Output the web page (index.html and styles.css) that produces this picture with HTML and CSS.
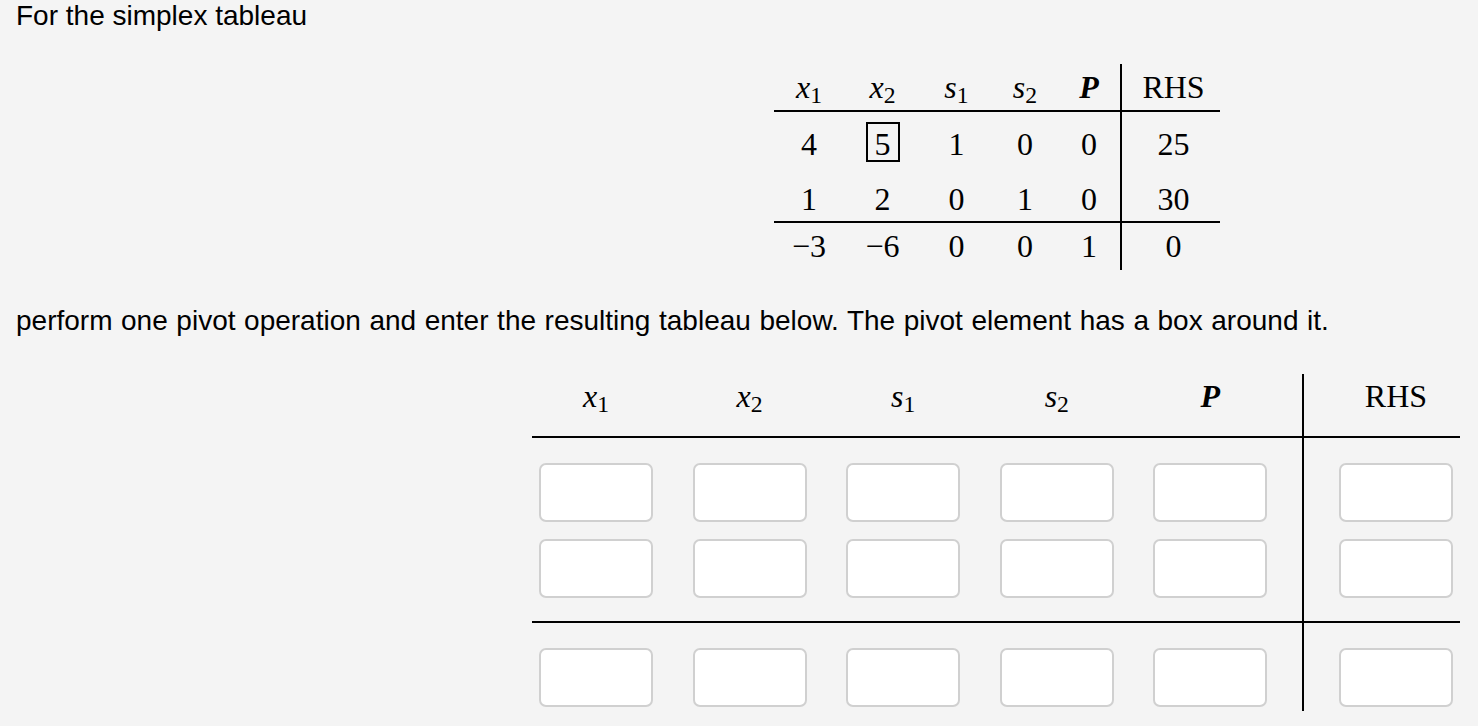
FILE: index.html
```html
<!DOCTYPE html>
<html lang="en">
<head>
<meta charset="utf-8">
<title>Simplex tableau pivot</title>
<link rel="stylesheet" href="styles.css">
</head>
<body>
<p class="prompt">For the simplex tableau</p>

<div class="given">
  <div class="gc gh"><i>x</i><span class="sb">1</span></div>
  <div class="gc gh"><i>x</i><span class="sb">2</span></div>
  <div class="gc gh"><i>s</i><span class="sb">1</span></div>
  <div class="gc gh"><i>s</i><span class="sb">2</span></div>
  <div class="gc gh"><b><i>P</i></b></div>
  <div class="gc gh rhs">RHS</div>

  <div class="gc g1">4</div>
  <div class="gc g1"><span class="pivot">5</span></div>
  <div class="gc g1">1</div>
  <div class="gc g1">0</div>
  <div class="gc g1">0</div>
  <div class="gc g1 rhs">25</div>

  <div class="gc g2">1</div>
  <div class="gc g2">2</div>
  <div class="gc g2">0</div>
  <div class="gc g2">1</div>
  <div class="gc g2">0</div>
  <div class="gc g2 rhs">30</div>

  <div class="gc g3">&minus;3</div>
  <div class="gc g3">&minus;6</div>
  <div class="gc g3">0</div>
  <div class="gc g3">0</div>
  <div class="gc g3">1</div>
  <div class="gc g3 rhs">0</div>
</div>

<p class="prompt prompt-2">perform one pivot operation and enter the resulting tableau below. The pivot element has a box around it.</p>

<div class="answer">
  <div class="ac ah"><span class="lab"><i>x</i><span class="sb">1</span></span></div>
  <div class="ac ah"><span class="lab"><i>x</i><span class="sb">2</span></span></div>
  <div class="ac ah"><span class="lab"><i>s</i><span class="sb">1</span></span></div>
  <div class="ac ah"><span class="lab"><i>s</i><span class="sb">2</span></span></div>
  <div class="ac ah"><span class="lab"><b><i>P</i></b></span></div>
  <div class="ac ah arhs"><span class="lab">RHS</span></div>

  <div class="ac a1"><input class="box" type="text" aria-label="row 1 x1"></div>
  <div class="ac a1"><input class="box" type="text" aria-label="row 1 x2"></div>
  <div class="ac a1"><input class="box" type="text" aria-label="row 1 s1"></div>
  <div class="ac a1"><input class="box" type="text" aria-label="row 1 s2"></div>
  <div class="ac a1"><input class="box" type="text" aria-label="row 1 P"></div>
  <div class="ac a1 arhs"><input class="box" type="text" aria-label="row 1 RHS"></div>

  <div class="ac a2"><input class="box" type="text" aria-label="row 2 x1"></div>
  <div class="ac a2"><input class="box" type="text" aria-label="row 2 x2"></div>
  <div class="ac a2"><input class="box" type="text" aria-label="row 2 s1"></div>
  <div class="ac a2"><input class="box" type="text" aria-label="row 2 s2"></div>
  <div class="ac a2"><input class="box" type="text" aria-label="row 2 P"></div>
  <div class="ac a2 arhs"><input class="box" type="text" aria-label="row 2 RHS"></div>

  <div class="ac a3"><input class="box" type="text" aria-label="row 3 x1"></div>
  <div class="ac a3"><input class="box" type="text" aria-label="row 3 x2"></div>
  <div class="ac a3"><input class="box" type="text" aria-label="row 3 s1"></div>
  <div class="ac a3"><input class="box" type="text" aria-label="row 3 s2"></div>
  <div class="ac a3"><input class="box" type="text" aria-label="row 3 P"></div>
  <div class="ac a3 arhs"><input class="box" type="text" aria-label="row 3 RHS"></div>
</div>
</body>
</html>
```

FILE: styles.css
```css
html, body {
  margin: 0;
  padding: 0;
  background: #f4f4f4;
}

body {
  color: #000;
  font-family: "Liberation Sans", Arial, sans-serif;
}

.prompt {
  margin: 0;
  padding-left: 16px;
  font-size: 28px;
  line-height: 32px;
}

.prompt-2 {
  margin-top: 35px;
  word-spacing: 0.8px;
}

/* ---------- given tableau ---------- */
.given {
  display: grid;
  grid-template-columns: 70px 77px 71px 66px 62px 100px;
  width: 446px;
  margin: 32px 0 0 774px;
  font-family: "Liberation Serif", "Times New Roman", serif;
  font-size: 32px;
}

.gc {
  box-sizing: border-box;
  text-align: center;
  white-space: nowrap;
}

.gh {
  height: 48px;
  line-height: 46px;
  border-bottom: 2px solid #000;
}

.g1 {
  height: 55px;
  padding-top: 10px;
  line-height: 44px;
}

.g2 {
  height: 56px;
  padding-top: 10px;
  line-height: 44px;
  border-bottom: 2px solid #000;
}

.g3 {
  height: 47px;
  line-height: 47px;
}

.rhs {
  border-left: 2px solid #000;
  padding-left: 5px;
}

.sb {
  font-size: 0.74em;
  line-height: 0;
  vertical-align: -0.22em;
}

.pivot {
  display: inline-block;
  box-sizing: border-box;
  width: 34px;
  height: 40px;
  padding-top: 5px;
  line-height: 30px;
  border: 2px solid #000;
  text-align: center;
}

/* ---------- answer tableau ---------- */
.answer {
  display: grid;
  grid-template-columns: 153.6px 153.6px 153.6px 153.6px 155.6px 158px;
  width: 928px;
  margin: 37px 0 0 532px;
  font-family: "Liberation Serif", "Times New Roman", serif;
  font-size: 32px;
}

.ac {
  box-sizing: border-box;
  padding-left: 7px;
}

.lab {
  display: block;
  width: 114px;
  text-align: center;
  white-space: nowrap;
}

.ah {
  height: 64px;
  line-height: 44px;
  border-bottom: 2px solid #000;
}

.a1 {
  padding-top: 25px;
  padding-bottom: 8px;
}

.a2 {
  padding-top: 9px;
  padding-bottom: 23px;
  border-bottom: 2px solid #000;
}

.a3 {
  padding-top: 25px;
  padding-bottom: 4px;
}

.arhs {
  display: flex;
  justify-content: flex-end;
  padding-left: 0;
  padding-right: 7px;
  border-left: 2px solid #000;
}

.box {
  display: block;
  box-sizing: border-box;
  width: 114px;
  height: 59px;
  margin: 0;
  padding: 0 8px;
  border: 2px solid #d0d0d0;
  border-radius: 7px;
  background: #fff;
  font: 20px "Liberation Sans", Arial, sans-serif;
  outline: none;
}
```
